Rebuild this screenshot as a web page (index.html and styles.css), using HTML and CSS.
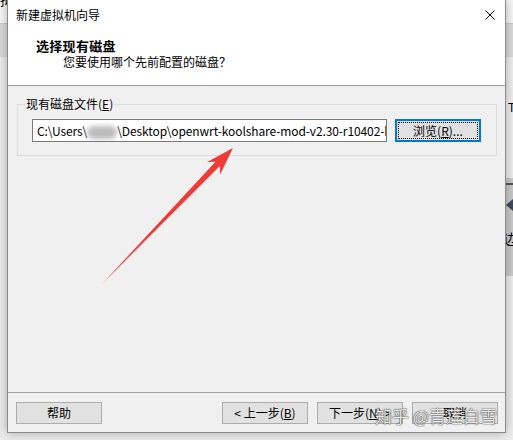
FILE: index.html
```html
<!DOCTYPE html>
<html lang="zh-CN">
<head>
<meta charset="utf-8">
<title>新建虚拟机向导</title>
<link rel="stylesheet" href="styles.css">
</head>
<body>
<div class="app">
  <div class="app-menubar"><span class="app-menu-text">虚拟机</span></div>
  <div class="app-toolbar"></div>
  <div class="app-main">
    <div class="app-pane"></div>
    <div class="app-side">
      <div class="side-letter">T</div>
      <div class="side-panel">
        <div class="side-dash"></div>
        <div class="side-tri"></div>
        <div class="side-text">边</div>
      </div>
    </div>
  </div>
</div>

<div class="dialog">
  <div class="titlebar">
    <span class="title">新建虚拟机向导</span>
    <span class="close">
      <svg width="10" height="10" viewBox="0 0 10 10"><path d="M0.5 0.5 L9.5 9.5 M9.5 0.5 L0.5 9.5" stroke="#000" stroke-width="1" fill="none"/></svg>
    </span>
  </div>
  <div class="header">
    <div class="heading">选择现有磁盘</div>
    <div class="subheading">您要使用哪个先前配置的磁盘？</div>
  </div>
  <div class="content">
    <fieldset class="group">
      <legend>现有磁盘文件(<u>E</u>)</legend>
      <div class="row">
        <div class="pathbox">C:\Users\<span class="blur"></span>\Desktop\openwrt-koolshare-mod-v2.30-r10402-koolshare.vmdk</div>
        <button class="btn btn-focus">浏览(<u>R</u>)...</button>
      </div>
    </fieldset>
  </div>
  <div class="footer">
    <button class="btn">帮助</button>
    <div class="spacer"></div>
    <button class="btn">&lt; 上一步(<u>B</u>)</button>
    <button class="btn">下一步(<u>N</u>) &gt;</button>
    <button class="btn">取消</button>
  </div>
</div>

<svg class="arrow" width="513" height="440" viewBox="0 0 513 440">
  <polygon points="102,284 104,282 219.9,165.9 220.1,174.4 233,148 207.1,161.9 215.5,161.7" fill="#ee3b36"/>
</svg>
<div class="watermark">知乎 @青莲白雪</div>
</body>
</html>
```
FILE: styles.css
```css
* { box-sizing: border-box; }
html, body { margin: 0; padding: 0; }
body {
  width: 513px;
  height: 440px;
  overflow: hidden;
  position: relative;
  font-family: "Noto Sans CJK SC", "Microsoft YaHei", sans-serif;
  font-size: 12px;
  color: #000;
  background: #f0f0f0;
}

/* background application */
.app { display: flex; flex-direction: column; height: 440px; }
.app-menubar {
  height: 24px;
  background: #f7f7f7;
  border-bottom: 1px solid #c9c9c9;
  overflow: hidden;
}
.app-menu-text {
  display: block;
  margin-top: -9px;
  margin-left: -14px;
  font-size: 14px;
  line-height: 16px;
}
.app-toolbar { height: 33px; background: #dadada; }
.app-main { flex: 1; display: flex; }
.app-pane { flex: 1; background: #ececec; }
.app-side {
  width: 14px;
  background: #eeeeee;
  display: flex;
  flex-direction: column;
}
.side-letter {
  margin-top: 44px;
  padding-left: 9px;
  font-family: "Liberation Sans", sans-serif;
  font-size: 12px;
  line-height: 14px;
}
.side-panel {
  margin-top: 63px;
  height: 98px;
  background: #c9c9c9;
  display: flex;
  flex-direction: column;
  overflow: hidden;
}
.side-dash { margin: 5px 0 0 7px; height: 2px; background: #555; }
.side-tri {
  margin: 14px 0 0 7px;
  width: 0; height: 0;
  border-top: 6px solid transparent;
  border-bottom: 6px solid transparent;
  border-right: 7px solid #3d4a5a;
}
.side-text { margin: 19px 0 0 4px; font-size: 14px; line-height: 16px; white-space: nowrap; }

/* dialog window */
.dialog {
  position: absolute;
  left: 7px;
  top: -1px;
  width: 499px;
  height: 434px;
  border: 1px solid #8a8a8a;
  background: #f0f0f0;
  box-shadow: 0 0 10px rgba(0, 0, 0, 0.28);
  display: flex;
  flex-direction: column;
}
.titlebar {
  height: 30px;
  background: #fff;
  display: flex;
  align-items: center;
  justify-content: space-between;
  padding-left: 8px;
}
.title { line-height: 16px; }
.close {
  width: 30px;
  height: 30px;
  display: flex;
  align-items: center;
  justify-content: center;
}
.header {
  background: #fff;
  padding: 8px 0 15px 28px;
  border-bottom: 1px solid #a0a0a0;
}
.heading { font-size: 13px; font-weight: bold; line-height: 16px; letter-spacing: 0.3px; }
.subheading { padding-left: 27px; line-height: 16px; }

.content { flex: 1; padding: 10px 8px 0 9px; }
.group {
  margin: 0;
  min-width: 0;
  border: 1px solid #dcdcdc;
  padding: 7px 15px 13px 14px;
}
.group legend {
  margin-left: -7px;
  padding: 0 1px;
  line-height: 16px;
}
.row { display: flex; gap: 8px; }
.pathbox {
  flex: 1;
  min-width: 0;
  height: 23px;
  border: 1px solid #7a7a7a;
  background: #fff;
  padding: 0 4px;
  line-height: 21px;
  letter-spacing: -0.1px;
  white-space: nowrap;
  overflow: hidden;
}
.blur {
  display: inline-block;
  width: 30px;
  height: 13px;
  vertical-align: middle;
  background: #bcbcbc;
  border-radius: 7px;
  filter: blur(2.5px);
}

.btn {
  width: 86px;
  height: 23px;
  flex: none;
  padding: 0;
  border: 1px solid #adadad;
  background: #e1e1e1;
  font: inherit;
  color: #000;
  line-height: 20px;
  white-space: nowrap;
}
.btn-focus {
  border: 2px solid #0078d7;
  outline: 1px dotted #000;
  outline-offset: -4px;
}

.footer {
  border-top: 1px solid #a0a0a0;
  padding: 9px 7px 8px 8px;
  display: flex;
  gap: 9px;
}
.footer .btn { height: 22px; }
.spacer { flex: 1; }

/* annotations laid over the screenshot */
.arrow { position: absolute; left: 0; top: 0; pointer-events: none; }
.watermark {
  position: absolute;
  left: 375px;
  top: 405px;
  font-size: 17px;
  line-height: 22px;
  color: rgba(255, 255, 255, 0.92);
  text-shadow: 0 0 1px rgba(0, 0, 0, 0.7), 0 0 1px rgba(0, 0, 0, 0.6), 0 0 2px rgba(0, 0, 0, 0.3);
  white-space: nowrap;
  pointer-events: none;
}
```
